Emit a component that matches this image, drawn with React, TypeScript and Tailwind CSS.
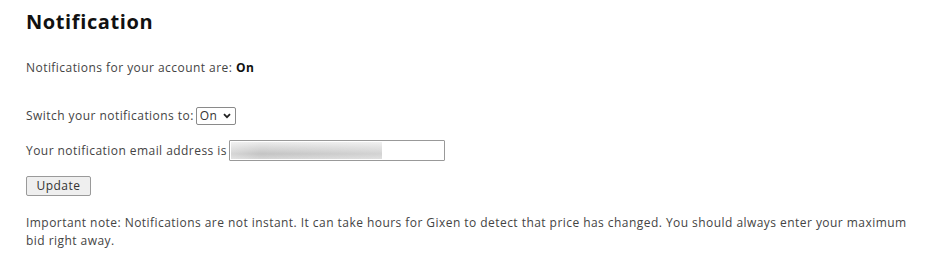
import React from 'react';

const font = { fontFamily: '"Open Sans", "Liberation Sans", sans-serif' };

export default function App() {
  return (
    <div
      className="min-h-screen bg-white pl-[26px] pr-4 text-[12px] leading-[18px] tracking-[0.45px] text-[#444]"
      style={font}
    >
      <h2 className="pt-[10px] text-[20px] font-bold leading-[24px] tracking-[0.6px] text-[#111]">Notification</h2>

      <p className="mt-[25px]">
        Notifications for your account are: <b className="font-bold text-[#111]">On</b>
      </p>

      <div className="mt-[30px] flex h-[18px] items-center">
        <span>Switch your notifications to:</span>
        <div className="relative ml-[2px] inline-flex">
          <select
            defaultValue="on"
            className="h-[18px] w-[40px] appearance-none rounded-[2px] border border-[#8a8a8a] bg-white pl-[3px] text-[12px] leading-[16px] tracking-[0.45px] text-[#333] outline-none"
            style={font}
          >
            <option value="on">On</option>
            <option value="off">Off</option>
          </select>
          <svg
            className="pointer-events-none absolute right-[5px] top-[6px]"
            width="8"
            height="6"
            viewBox="0 0 8 6"
          >
            <path d="M1 1.2 L4 4.2 L7 1.2" fill="none" stroke="#222" strokeWidth="1.8" />
          </svg>
        </div>
      </div>

      <div className="mt-[15px] flex h-[21px] items-center">
        <span>Your notification email address is</span>
        <div className="relative ml-[2px]">
          <input
            type="text"
            className="h-[21px] w-[216px] rounded-[1px] border border-[#999] bg-white outline-none"
          />
          <div className="pointer-events-none absolute left-[2px] top-[2px] h-[17px] w-[151px] bg-linear-to-b from-[#ececec] via-[#c4c4c4] via-70% to-[#d6d6d6]">
            <div className="h-full w-full bg-linear-to-r from-white/30 via-transparent via-20% to-white/25" />
          </div>
        </div>
      </div>

      <button
        className="mt-[15px] h-[20px] w-[65px] rounded-[2px] border border-[#9a9a9a] bg-[#efefef] text-[12px] leading-[18px] tracking-[0.45px] text-[#333]"
        style={font}
      >
        Update
      </button>

      <p className="mt-[18px] max-w-[896px]">
        Important note: Notifications are not instant. It can take hours for Gixen to detect that price has changed. You
        should always enter your maximum bid right away.
      </p>
    </div>
  );
}
